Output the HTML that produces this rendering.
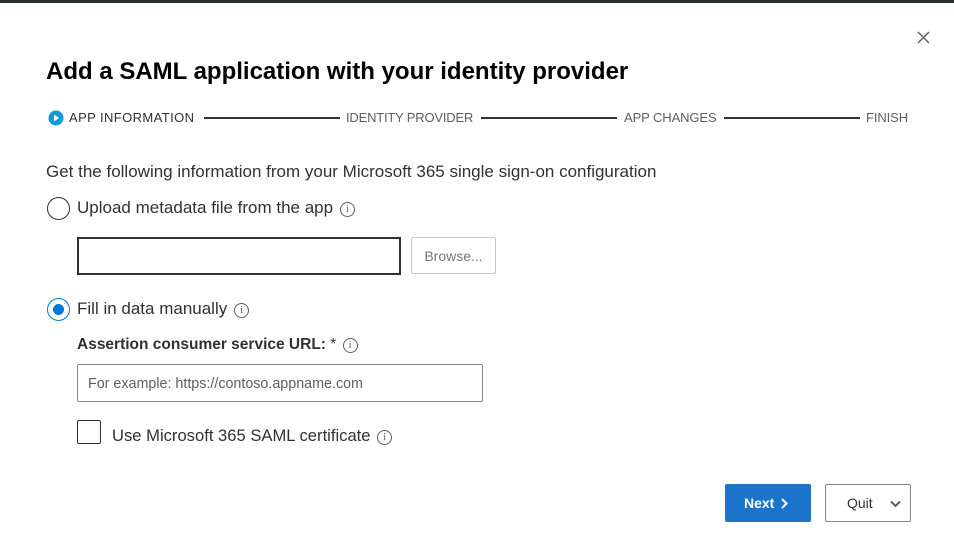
<!DOCTYPE html>
<html><head><style>
*{margin:0;padding:0;box-sizing:border-box}
body{width:954px;height:542px;background:#fff;font-family:"Liberation Sans",sans-serif;color:#323130;position:relative;overflow:hidden}
.a{position:absolute;white-space:nowrap}
.line{position:absolute;height:2px;background:#323130;top:117px}
.step{font-size:13px;color:#605e5c;top:110px}
.info{display:inline-block;width:15px;height:15px;border:1px solid #605e5c;border-radius:50%;font-size:10px;line-height:13px;text-align:center;color:#605e5c;vertical-align:1px;font-family:"Liberation Serif",serif;margin-left:2px}
</style></head><body>
<div class="a" style="left:0;top:0;width:954px;height:3px;background:#252b2d"></div>
<svg class="a" style="left:917px;top:31px" width="13" height="13" viewBox="0 0 13 13"><path d="M1 1L12 12M12 1L1 12" stroke="#605e5c" stroke-width="1.4"/></svg>
<div class="a" style="left:46px;top:58px;font-size:24px;font-weight:bold;color:#000">Add a SAML application with your identity provider</div>
<svg class="a" style="left:48px;top:110px" width="16" height="16"><circle cx="8" cy="8" r="7.5" fill="#0d9bd8"/><path d="M6 4.5L11 8L6 11.5Z" fill="#fff"/></svg>
<div class="a step" style="left:69px;color:#323130;letter-spacing:.4px">APP INFORMATION</div>
<div class="line" style="left:204px;width:136px"></div>
<div class="a step" style="left:346px;letter-spacing:-.2px">IDENTITY PROVIDER</div>
<div class="line" style="left:481px;width:136px"></div>
<div class="a step" style="left:624px;letter-spacing:-.1px">APP CHANGES</div>
<div class="line" style="left:724px;width:136px"></div>
<div class="a step" style="left:866px;letter-spacing:-.1px">FINISH</div>
<div class="a" style="left:46px;top:162px;font-size:17px">Get the following information from your Microsoft 365 single sign-on configuration</div>
<div class="a" style="left:47px;top:197px;width:23px;height:23px;border:1.5px solid #323130;border-radius:50%"></div>
<div class="a" style="left:77px;top:198px;font-size:17px">Upload metadata file from the app <span class="info">i</span></div>
<div class="a" style="left:77px;top:237px;width:324px;height:38px;border:2px solid #323130"></div>
<div class="a" style="left:411px;top:237px;width:85px;height:37px;border:1px solid #c8c6c4;border-radius:2px;font-size:14px;color:#797775;text-align:center;line-height:37px">Browse...</div>
<div class="a" style="left:47px;top:298px;width:23px;height:23px;border:1.5px solid #0078d4;border-radius:50%"></div>
<div class="a" style="left:53px;top:304px;width:11px;height:11px;background:#0078d4;border-radius:50%"></div>
<div class="a" style="left:77px;top:299px;font-size:17px">Fill in data manually <span class="info">i</span></div>
<div class="a" style="left:77px;top:336px;font-size:15.5px;font-weight:bold">Assertion consumer service URL: <span style="font-weight:normal">*</span> <span class="info" style="font-weight:normal">i</span></div>
<div class="a" style="left:77px;top:364px;width:406px;height:38px;border:1px solid #8a8886;border-radius:2px;font-size:14.3px;color:#605e5c;padding-left:10px;line-height:38px">For example: https://contoso.appname.com</div>
<div class="a" style="left:77px;top:420px;width:24px;height:24px;border:1px solid #323130;border-radius:2px"></div>
<div class="a" style="left:112px;top:426px;font-size:16.6px">Use Microsoft 365 SAML certificate <span class="info">i</span></div>
<div class="a" style="left:725px;top:484px;width:86px;height:38px;background:#1b74c9;border-radius:2px;color:#fff;font-size:14px;font-weight:bold;line-height:38px;padding-left:19px">Next <svg width="8" height="11" style="vertical-align:-1px;margin-left:2px"><path d="M2 1L6.5 5.5L2 10" stroke="#fff" stroke-width="2" fill="none"/></svg></div>
<div class="a" style="left:825px;top:484px;width:86px;height:38px;border:1px solid #8a8886;border-radius:2px;font-size:14px;line-height:36px;padding-left:21px">Quit <svg width="11" height="8" style="margin-left:13px"><path d="M1 1.5L5.5 6L10 1.5" stroke="#605e5c" stroke-width="2" fill="none"/></svg></div>
</body></html>
